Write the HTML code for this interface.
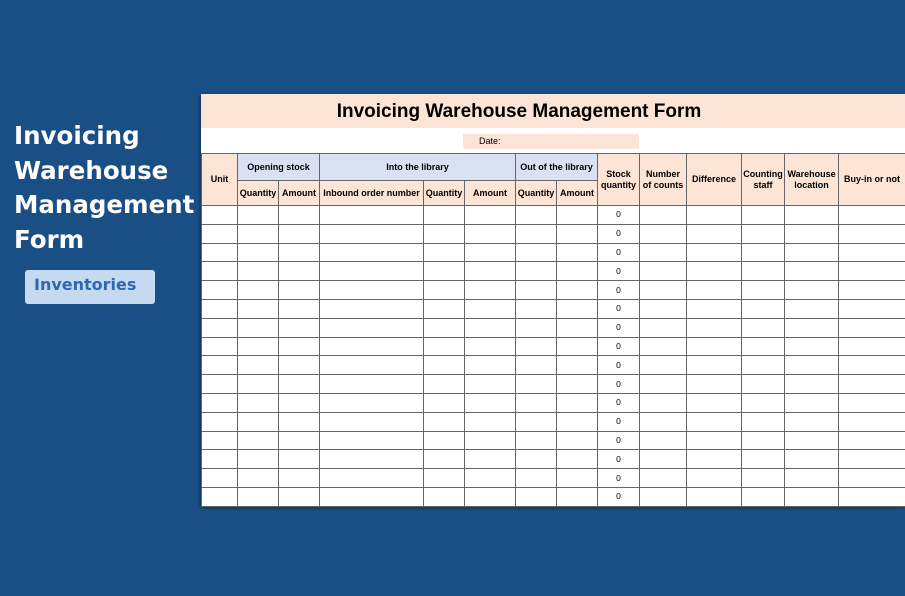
<!DOCTYPE html>
<html><head><meta charset="utf-8"><style>
*{margin:0;padding:0;box-sizing:border-box}
body{width:905px;height:596px;background:#1a4f85;position:relative;overflow:hidden;font-family:"Liberation Sans",Arial,sans-serif}
.lt{position:absolute;left:14px;top:119px;color:#fff;font-family:"DejaVu Sans","Liberation Sans",sans-serif;font-weight:bold;font-size:24.5px;line-height:34.5px;letter-spacing:0}
.btn{position:absolute;left:25px;top:270px;width:130px;height:34px;background:#c5d9f1;border-radius:3px;color:#2f68b0;font-family:"DejaVu Sans","Liberation Sans",sans-serif;font-weight:bold;font-size:16px;line-height:30px;padding-left:9px}
.sheet{position:absolute;left:201px;top:94px;width:704px;height:413px;background:#fff;box-shadow:-1px 1px 3px rgba(0,0,0,.4)}
.title{height:34px;background:#fce4d6;text-align:center;font-weight:bold;font-size:19px;line-height:36px;color:#000;padding-right:68px}
.date{position:absolute;left:262px;top:40px;width:176px;height:15px;background:#fce4d6;font-size:9px;line-height:15px;padding-left:16px}
table{position:absolute;left:0;top:59px;border-collapse:collapse;table-layout:fixed;width:704px}
td{border:1px solid #666;font-size:9px;text-align:center;font-weight:bold;line-height:11px;padding:0;overflow:hidden;white-space:nowrap}
tr.h1 td{height:27px}
tr.h2 td{height:25px}
.p{background:#fce4d6}
.b{background:#d9e1f2}
tr.d td{height:18.8px;font-weight:normal;font-size:8.5px}
</style></head><body>
<div class="lt">Invoicing<br>Warehouse<br>Management<br>Form</div>
<div class="btn">Inventories</div>
<div class="sheet">
<div class="title">Invoicing Warehouse Management Form</div>
<div class="date">Date:</div>
<table>
<colgroup><col style="width:36px"><col style="width:41px"><col style="width:41px"><col style="width:104px"><col style="width:41px"><col style="width:51px"><col style="width:41px"><col style="width:41px"><col style="width:42px"><col style="width:47px"><col style="width:55px"><col style="width:43px"><col style="width:54px"><col style="width:67px"></colgroup>
<tr class="h1"><td class="p" rowspan="2">Unit</td><td class="b" colspan="2">Opening stock</td><td class="b" colspan="3">Into the library</td><td class="b" colspan="2">Out of the library</td><td class="p" rowspan="2">Stock<br>quantity</td><td class="p" rowspan="2">Number<br>of counts</td><td class="p" rowspan="2">Difference</td><td class="p" rowspan="2">Counting<br>staff</td><td class="p" rowspan="2">Warehouse<br>location</td><td class="p" rowspan="2">Buy-in or not</td></tr>
<tr class="h2"><td class="p">Quantity</td><td class="p">Amount</td><td class="p">Inbound order number</td><td class="p">Quantity</td><td class="p">Amount</td><td class="p">Quantity</td><td class="p">Amount</td></tr>
<tr class="d"><td></td><td></td><td></td><td></td><td></td><td></td><td></td><td></td><td>0</td><td></td><td></td><td></td><td></td><td></td></tr>
<tr class="d"><td></td><td></td><td></td><td></td><td></td><td></td><td></td><td></td><td>0</td><td></td><td></td><td></td><td></td><td></td></tr>
<tr class="d"><td></td><td></td><td></td><td></td><td></td><td></td><td></td><td></td><td>0</td><td></td><td></td><td></td><td></td><td></td></tr>
<tr class="d"><td></td><td></td><td></td><td></td><td></td><td></td><td></td><td></td><td>0</td><td></td><td></td><td></td><td></td><td></td></tr>
<tr class="d"><td></td><td></td><td></td><td></td><td></td><td></td><td></td><td></td><td>0</td><td></td><td></td><td></td><td></td><td></td></tr>
<tr class="d"><td></td><td></td><td></td><td></td><td></td><td></td><td></td><td></td><td>0</td><td></td><td></td><td></td><td></td><td></td></tr>
<tr class="d"><td></td><td></td><td></td><td></td><td></td><td></td><td></td><td></td><td>0</td><td></td><td></td><td></td><td></td><td></td></tr>
<tr class="d"><td></td><td></td><td></td><td></td><td></td><td></td><td></td><td></td><td>0</td><td></td><td></td><td></td><td></td><td></td></tr>
<tr class="d"><td></td><td></td><td></td><td></td><td></td><td></td><td></td><td></td><td>0</td><td></td><td></td><td></td><td></td><td></td></tr>
<tr class="d"><td></td><td></td><td></td><td></td><td></td><td></td><td></td><td></td><td>0</td><td></td><td></td><td></td><td></td><td></td></tr>
<tr class="d"><td></td><td></td><td></td><td></td><td></td><td></td><td></td><td></td><td>0</td><td></td><td></td><td></td><td></td><td></td></tr>
<tr class="d"><td></td><td></td><td></td><td></td><td></td><td></td><td></td><td></td><td>0</td><td></td><td></td><td></td><td></td><td></td></tr>
<tr class="d"><td></td><td></td><td></td><td></td><td></td><td></td><td></td><td></td><td>0</td><td></td><td></td><td></td><td></td><td></td></tr>
<tr class="d"><td></td><td></td><td></td><td></td><td></td><td></td><td></td><td></td><td>0</td><td></td><td></td><td></td><td></td><td></td></tr>
<tr class="d"><td></td><td></td><td></td><td></td><td></td><td></td><td></td><td></td><td>0</td><td></td><td></td><td></td><td></td><td></td></tr>
<tr class="d"><td></td><td></td><td></td><td></td><td></td><td></td><td></td><td></td><td>0</td><td></td><td></td><td></td><td></td><td></td></tr>
</table>
</div>
</body></html>
